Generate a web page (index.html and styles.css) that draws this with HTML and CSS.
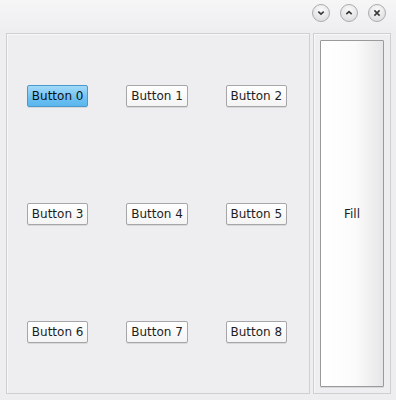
FILE: index.html
```html
<!DOCTYPE html>
<html>
<head>
<meta charset="utf-8">
<link rel="stylesheet" href="styles.css">
</head>
<body>
<div class="window">
  <div class="titlebar">
    <span class="ctl">
      <svg width="18" height="18" viewBox="0 0 18 18"><path d="M6.3 7.6 L9 10.2 L11.7 7.6" fill="none" stroke="#383838" stroke-width="1.6"/></svg>
    </span>
    <span class="ctl">
      <svg width="18" height="18" viewBox="0 0 18 18"><path d="M6.3 10.2 L9 7.6 L11.7 10.2" fill="none" stroke="#383838" stroke-width="1.6"/></svg>
    </span>
    <span class="ctl">
      <svg width="18" height="18" viewBox="0 0 18 18"><path d="M6.4 6.4 L11.6 11.6 M11.6 6.4 L6.4 11.6" fill="none" stroke="#383838" stroke-width="1.6"/></svg>
    </span>
  </div>
  <div class="content">
    <div class="panel grid">
      <div class="cell"><button class="btn focused">Button 0</button></div>
      <div class="cell"><button class="btn">Button 1</button></div>
      <div class="cell"><button class="btn">Button 2</button></div>
      <div class="cell"><button class="btn">Button 3</button></div>
      <div class="cell"><button class="btn">Button 4</button></div>
      <div class="cell"><button class="btn">Button 5</button></div>
      <div class="cell"><button class="btn">Button 6</button></div>
      <div class="cell"><button class="btn">Button 7</button></div>
      <div class="cell"><button class="btn">Button 8</button></div>
    </div>
    <div class="panel side">
      <button class="fill">Fill</button>
    </div>
  </div>
</div>
</body>
</html>
```

FILE: styles.css
```css
html, body {
  margin: 0;
  padding: 0;
}
body {
  width: 396px;
  height: 400px;
  overflow: hidden;
  font-family: "DejaVu Sans", "Liberation Sans", sans-serif;
}
.window {
  width: 396px;
  height: 400px;
  background: #eeeef0;
  display: flex;
  flex-direction: column;
}
.titlebar {
  height: 33px;
  flex: none;
  display: flex;
  justify-content: flex-end;
  align-items: center;
  gap: 10px;
  padding: 0 10px 7px 0;
  box-sizing: border-box;
  background: linear-gradient(#f6f6f7, #eeeef0);
}
.ctl {
  width: 18px;
  height: 18px;
  flex: none;
  border-radius: 50%;
  box-sizing: border-box;
  border: 1px solid #acacaf;
  background: radial-gradient(circle at 50% 30%, #fafafa, #d8d8db);
  display: flex;
  align-items: center;
  justify-content: center;
  position: relative;
}
.ctl svg {
  flex: none;
  position: absolute;
  left: -1px;
  top: -1px;
}
.content {
  flex: 1;
  display: flex;
  gap: 3px;
  padding: 0 5px 6px 6px;
}
.panel {
  border: 1px solid #cfcfd2;
  box-shadow: inset 1px 1px 0 #f8f8f9;
  box-sizing: border-box;
}
.grid {
  width: 304px;
  display: grid;
  grid-template-columns: repeat(3, 1fr);
  grid-template-rows: repeat(3, 1fr);
  padding: 3px 3px 2px 1px;
}
.cell {
  display: flex;
  align-items: center;
  justify-content: center;
}
.btn {
  font-family: "DejaVu Sans", "Liberation Sans", sans-serif;
  font-size: 12px;
  color: #1e1e1e;
  height: 22px;
  padding: 0 4px;
  margin: 0;
  border: 1px solid #a6a6a8;
  border-radius: 2px;
  background: linear-gradient(#ffffff, #f4f4f5);
  box-shadow: 0 1px 0 #d8d8da;
  line-height: 20px;
}
.btn.focused {
  border-color: #4b98cc;
  background: linear-gradient(#a3daf9, #6cc0f2 60%, #5bb6ee);
  color: #111;
}
.side {
  width: 78px;
  padding: 6px;
  display: flex;
}
.fill {
  flex: 1;
  margin: 0;
  font-family: "DejaVu Sans", "Liberation Sans", sans-serif;
  font-size: 12px;
  color: #1e1e1e;
  border: 1px solid #9a9a9c;
  border-radius: 1px;
  background: linear-gradient(90deg, #ffffff 0%, #fbfbfb 55%, #e6e6e8 100%);
  box-shadow: 0 1px 0 #d8d8da;
}
```
